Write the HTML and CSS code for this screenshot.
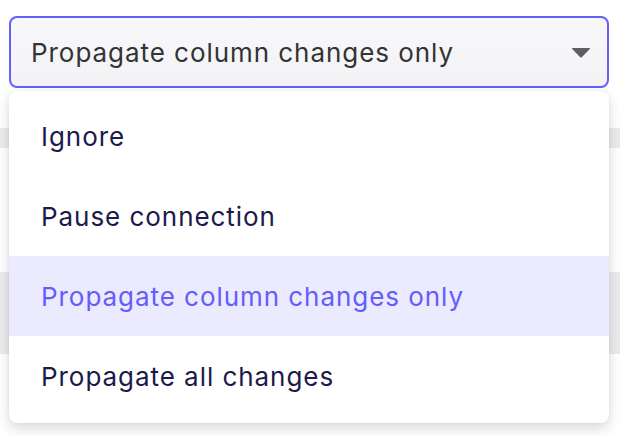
FILE: index.html
```html
<!DOCTYPE html>
<html>
<head>
<meta charset="utf-8">
<link rel="stylesheet" href="styles.css">
</head>
<body>
<div class="page">
  <div class="select">
    <span class="select-value">Propagate column changes only</span>
    <svg class="caret" width="20" height="11" viewBox="0 0 20 11"><path d="M1.5 1 H18.5 Q19.6 1 18.8 1.9 L11 10 Q10 11 9 10 L1.2 1.9 Q0.4 1 1.5 1 Z" fill="#5f5f62"/></svg>
  </div>
  <div class="band band-1"></div>
  <div class="band band-2"></div>
  <ul class="menu">
    <li class="item">Ignore</li>
    <li class="item">Pause connection</li>
    <li class="item active">Propagate column changes only</li>
    <li class="item">Propagate all changes</li>
  </ul>
</div>
</body>
</html>
```
FILE: styles.css
```css
* { box-sizing: border-box; }
html, body { margin: 0; padding: 0; background: #ffffff; }
body { font-family: Inter, "Noto Sans", sans-serif; width: 620px; height: 436px; overflow: hidden; }
.page { position: relative; padding-top: 16px; height: 436px; }
.select {
  margin: 0 11px 0 9px;
  height: 72px;
  border: 2px solid #6461fb;
  border-radius: 8px;
  background: linear-gradient(#f8f8fa, #f3f3f6);
  display: flex;
  align-items: center;
  justify-content: space-between;
  padding: 0 16px 0 20px;
}
.select-value { font-size: 26px; color: #333336; letter-spacing: 0.95px; }
.caret { display: block; }
.band { background: #ebebee; }
.band-1 { margin-top: 40px; height: 20px; }
.band-2 { margin-top: 124px; height: 82px; }
.menu {
  position: absolute;
  top: 91px;
  left: 9px;
  width: 600px;
  height: 332px;
  margin: 0;
  padding: 5px 0 7px;
  list-style: none;
  background: #ffffff;
  border-radius: 8px;
  box-shadow: 0 6px 14px rgba(0, 0, 0, 0.14), 0 0 4px rgba(0, 0, 0, 0.06);
}
.item {
  height: 80px;
  display: flex;
  align-items: center;
  padding-left: 32px;
  font-size: 26px;
  letter-spacing: 0.95px;
  color: #1c1a4a;
}
.item.active { background: #ebeafe; color: #615efb; }
```
